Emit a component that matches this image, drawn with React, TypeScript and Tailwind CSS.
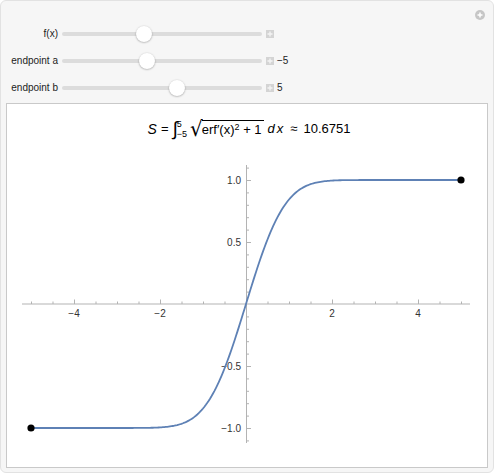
import React from 'react';

// error function approximation (Abramowitz & Stegun 7.1.26)
const erf = (x: number) => {
  const t = 1 / (1 + 0.3275911 * Math.abs(x));
  const y =
    1 -
    ((((1.061405429 * t - 1.453152027) * t + 1.421413741) * t - 0.284496736) * t + 0.254829592) *
      t *
      Math.exp(-x * x);
  return x >= 0 ? y : -y;
};

// plot coords (local to svg)
const X = (x: number) => 239 + 43 * x;
const Y = (y: number) => 148 - 124 * y;

const curve = (() => {
  const pts: string[] = [];
  for (let i = 0; i <= 300; i++) {
    const x = -5 + (10 * i) / 300;
    pts.push(`${X(x).toFixed(2)},${Y(erf(x)).toFixed(2)}`);
  }
  return 'M' + pts.join(' L');
})();

const PlusBox = () => (
  <div className="w-[8px] h-[8px] bg-[#d4d4d4] flex items-center justify-center">
    <svg width="6" height="6" viewBox="0 0 6 6">
      <path d="M3 0.5v5M0.5 3h5" stroke="#f4f4f4" strokeWidth="1.4" />
    </svg>
  </div>
);

const SliderRow: React.FC<{ label: string; pos: number; value?: string }> = ({ label, pos, value }) => (
  <div className="h-[27px] flex items-center">
    <div className="w-[57px] text-right text-[10px] text-[#222]">{label}</div>
    <div className="ml-[4px] w-[200px] h-[4px] rounded-full bg-[#dcdcdc] relative">
      <div
        className="absolute top-1/2 w-[16px] h-[16px] -mt-[8px] -ml-[8px] rounded-full bg-white shadow-[0_0.5px_2px_rgba(0,0,0,0.35)]"
        style={{ left: pos }}
      />
    </div>
    <div className="ml-[4px]">
      <PlusBox />
    </div>
    {value && <div className="ml-[3px] text-[10px] text-[#222]">{value}</div>}
  </div>
);

const xTicks: number[] = [];
for (let i = -10; i <= 10; i++) xTicks.push(i / 2);
const yTicks: number[] = [];
for (let i = -11; i <= 11; i++) yTicks.push(i / 10);

const Plot = () => (
  <svg width="479" height="311" viewBox="0 0 479 311" fontFamily="'Liberation Sans', Arial, sans-serif">
    {/* axes */}
    <line x1={15} y1={148} x2={463} y2={148} stroke="#b3b3b3" strokeWidth="1" />
    <line x1={239.5} y1={9} x2={239.5} y2={287} stroke="#b3b3b3" strokeWidth="1" />
    {xTicks.map((t) => {
      if (t === 0) return null;
      const major = Number.isInteger(t) && t % 2 === 0;
      const x = X(t) + 0.5;
      return <line key={'x' + t} x1={x} x2={x} y1={148} y2={major ? 143.5 : 145.5} stroke="#b3b3b3" />;
    })}
    {yTicks.map((t) => {
      if (Math.abs(t) < 1e-9) return null;
      const major = Math.abs(Math.round(t * 10) % 5) === 0;
      const y = Y(t) + 0.5;
      return <line key={'y' + t} x1={239.5} x2={major ? 244 : 242} y1={y} y2={y} stroke="#b3b3b3" />;
    })}
    {[-4, -2, 2, 4].map((t) => (
      <text key={'lx' + t} x={X(t)} y={161} fontSize="10" fill="#333" textAnchor="middle">
        {t < 0 ? '−' + Math.abs(t) : t}
      </text>
    ))}
    {[1, 0.5, -0.5, -1].map((t) => (
      <text key={'ly' + t} x={234} y={Y(t) + 3.6} fontSize="10" fill="#333" textAnchor="end">
        {(t < 0 ? '−' : '') + Math.abs(t).toFixed(1)}
      </text>
    ))}
    <path d={curve} fill="none" stroke="#5e81b5" strokeWidth="1.8" />
    <circle cx={X(-5)} cy={Y(erf(-5))} r="3.6" fill="#000" />
    <circle cx={X(5)} cy={Y(erf(5))} r="3.6" fill="#000" />
  </svg>
);

const App: React.FC = () => {
  return (
    <div className="w-[494px] h-[475px] bg-white font-['Liberation_Sans',Arial,sans-serif]">
      <div className="relative w-[494px] h-[473px] bg-[#f6f6f6] border border-[#e2e2e2] rounded-[6px] pt-[19px]">
        <div className="absolute right-[8px] top-[9px] w-[10px] h-[10px] rounded-full bg-[#c6c6c6] flex items-center justify-center">
          <svg width="6" height="6" viewBox="0 0 6 6">
            <path d="M3 0.5v5M0.5 3h5" stroke="#fff" strokeWidth="1.5" />
          </svg>
        </div>
        <SliderRow label="f(x)" pos={82} />
        <SliderRow label="endpoint a" pos={85} value="−5" />
        <SliderRow label="endpoint b" pos={115} value="5" />
        <div className="mt-[2px] mx-[5px] h-[365px] bg-white border border-[#c9c9c9]">
          <div className="h-[52px] flex items-start justify-center pt-[14px] pl-[4px] text-[13px] text-black">
            <div className="flex items-center whitespace-nowrap">
              <i className="text-[14px] leading-none">S</i>
              <span className="mx-[4px]">=</span>
              <span className="text-[19px] leading-none italic">∫</span>
              <span className="flex flex-col text-[9px] leading-[10px] -ml-[1px] mr-[3px] mt-[1px]">
                <span>5</span>
                <span>−5</span>
              </span>
              <span className="text-[20px] leading-none font-['DejaVu_Sans',sans-serif] scale-y-[1.05] -mr-[1px]">√</span>
              <span className="border-t border-black leading-[17px] mt-[1px] pr-[2px]">
                erf′(x)<sup className="text-[9px]">2</sup> + 1
              </span>
              <span className="ml-[4px] italic">d</span>
              <span className="ml-[2px] italic">x</span>
              <span className="ml-[7px]">≈</span>
              <span className="ml-[6px]">10.6751</span>
            </div>
          </div>
          <Plot />
        </div>
      </div>
    </div>
  );
};

export default App;
